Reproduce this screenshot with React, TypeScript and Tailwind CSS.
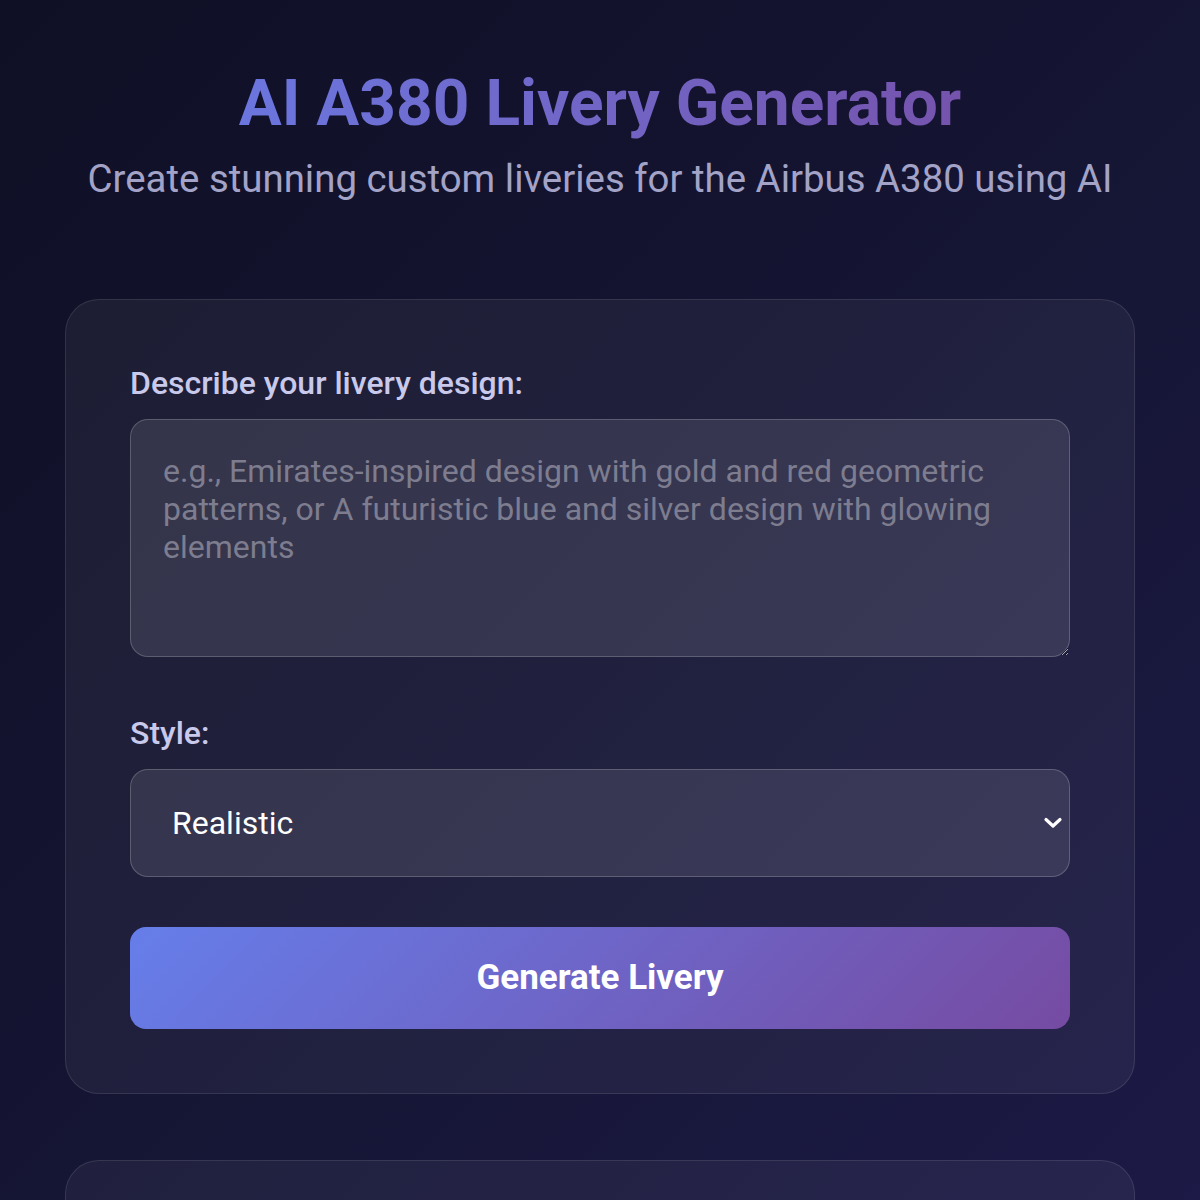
import { useState } from "react"

// Style options for the generator
const styles = ["Realistic", "Artistic", "Minimalist", "Retro", "Futuristic"]

function Chevron() {
  return (
    <svg width="20" height="12" viewBox="0 0 20 12" fill="none" className="pointer-events-none absolute right-[7px] top-1/2 -translate-y-1/2">
      <path d="M3 2.5L10 9L17 2.5" stroke="white" strokeWidth="3.2" strokeLinecap="round" strokeLinejoin="round" />
    </svg>
  )
}

export default function App() {
  const [prompt, setPrompt] = useState("")
  const [style, setStyle] = useState("Realistic")

  return (
    <div className="min-h-screen bg-[linear-gradient(135deg,#0f0f25_0%,#161636_50%,#1f1b4d_100%)] font-['Roboto',sans-serif]">
      <div className="mx-auto w-[1070px] pt-[66px] pb-16">
        {/* Header */}
        <div className="text-center">
          <h1 className="bg-gradient-to-r from-[#667eea] to-[#764ba2] bg-clip-text text-[64px] font-bold leading-[75px] text-transparent">
            AI A380 Livery Generator
          </h1>
          <p className="mt-[16px] text-[38.4px] leading-[44px] text-[#a3a3c7]">
            Create stunning custom liveries for the Airbus A380 using AI
          </p>
        </div>

        {/* Form card */}
        <div className="mt-[98px] rounded-[34px] border border-white/10 bg-white/[0.05] p-16">
          <label className="block text-[32px] font-medium leading-[38px] text-[#c9c9ec]">Describe your livery design:</label>
          <textarea
            value={prompt}
            onChange={(e) => setPrompt(e.target.value)}
            placeholder="e.g., Emirates-inspired design with gold and red geometric patterns, or A futuristic blue and silver design with glowing elements"
            className="mt-[17px] block h-[238px] w-full rounded-[18px] border border-white/20 bg-white/10 px-8 py-8 text-[32px] leading-[38px] text-white outline-none placeholder:text-[#7d7d8f]"
          />

          <label className="mt-[57px] block text-[32px] font-medium leading-[38px] text-[#c9c9ec]">Style:</label>
          <div className="relative mt-[17px]">
            <select
              value={style}
              onChange={(e) => setStyle(e.target.value)}
              className="block h-[108px] w-full appearance-none rounded-[18px] border border-white/20 bg-white/10 pl-[41px] text-[32px] text-white outline-none"
            >
              {styles.map((s) => (
                <option key={s} value={s} className="bg-[#2a2a48]">
                  {s}
                </option>
              ))}
            </select>
            <Chevron />
          </div>

          <button className="mt-[50px] h-[102px] w-full rounded-[16px] bg-[linear-gradient(135deg,#667eea_0%,#764ba2_100%)] text-[35px] font-bold text-white">
            Generate Livery
          </button>
        </div>

        {/* Preview card */}
        <div className="mt-[66px] h-[400px] rounded-[34px] border border-white/10 bg-white/[0.05] p-16" />
      </div>
    </div>
  )
}
